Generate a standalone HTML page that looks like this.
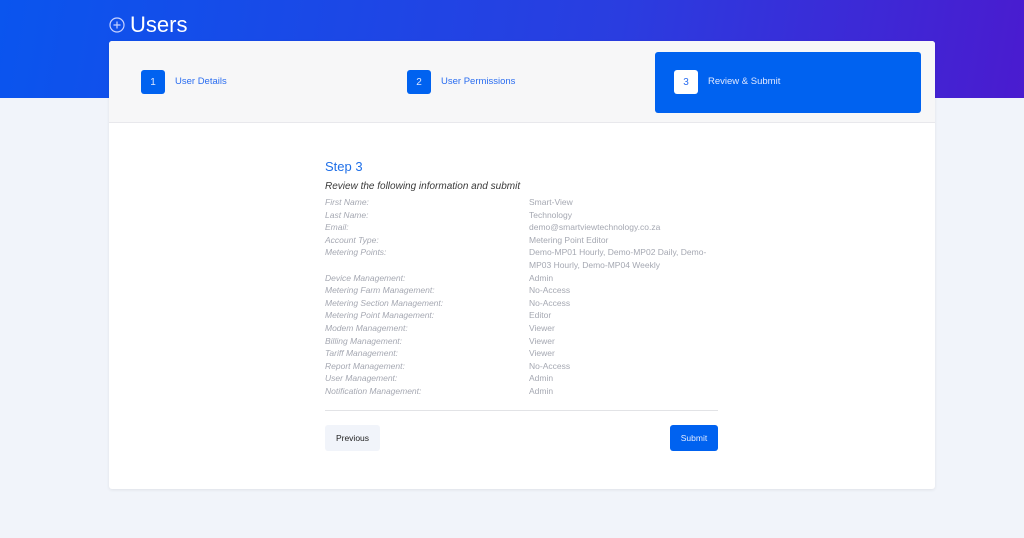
<!DOCTYPE html>
<html><head><style>
*{margin:0;padding:0;box-sizing:border-box}
body{width:1024px;height:538px;background:#f1f4fa;font-family:"Liberation Sans",sans-serif;position:relative;overflow:hidden}
.hdr{position:absolute;left:0;top:0;width:1024px;height:98px;background:linear-gradient(100deg,#0a55ee 0%,#2a3de0 60%,#4a1bcf 100%)}
.title{position:absolute;left:109px;top:12px;color:#fff;font-size:22px;display:flex;align-items:center}
.title svg{margin-right:5px}
.card{position:absolute;left:109px;top:41px;width:826px;height:448px;background:#fff;border-radius:3px;box-shadow:0 1px 3px rgba(0,0,0,.08)}
.steps{height:82px;background:#f7f7f8;border-bottom:1px solid #e8e8ec;position:relative;border-radius:3px 3px 0 0}
.st{position:absolute;top:29px;display:flex;align-items:center;font-size:9.5px;color:#2a6df0}
.num{width:24px;height:24px;border-radius:3px;background:#0062f0;color:#dfe8ff;font-size:10px;display:flex;align-items:center;justify-content:center;margin-right:10px}
.st span{margin-top:-1px}
.active{position:absolute;left:546px;top:11px;width:266px;height:61px;background:#0062f0;border-radius:3px}
.active .st{left:19px;top:18px;color:#e0e8ff}
.active .num{background:#fff;color:#2a6df0}
.content{position:absolute;left:216px;top:117px;width:393px}
h3{font-weight:normal;color:#1f6fe8;font-size:13px}
.sub{font-style:italic;color:#3a3a3a;font-size:10px;margin-top:7px;margin-bottom:4px}
table{border-collapse:collapse;font-size:8.5px;color:#a5a8b2}
td{line-height:12.6px;vertical-align:top;padding:0}
td.k{font-style:italic;width:204px}
td.v{width:180px}
.hr{border-top:1px solid #e2e3e6;margin-top:12px;width:393px}
.btns{display:flex;justify-content:space-between;margin-top:14px}
.prev{background:#f1f4fa;color:#222;font-size:8.5px;width:55px;height:26px;border-radius:3px;display:flex;align-items:center;justify-content:center}
.sub2{background:#0062f0;color:#e4ecff;font-size:8.5px;width:48px;height:26px;border-radius:3px;display:flex;align-items:center;justify-content:center}
</style></head><body>
<div class="hdr"></div>
<div class="title"><svg width="16" height="16" viewBox="0 0 16 16"><circle cx="8" cy="8" r="7" fill="none" stroke="#c8d2ff" stroke-width="1.2"/><path d="M8 4.5v7M4.5 8h7" stroke="#c8d2ff" stroke-width="1.2"/></svg>Users</div>
<div class="card">
<div class="steps">
<div class="st" style="left:32px"><div class="num">1</div><span>User Details</span></div>
<div class="st" style="left:298px"><div class="num">2</div><span>User Permissions</span></div>
<div class="active"><div class="st"><div class="num">3</div><span>Review &amp; Submit</span></div></div>
</div>
<div class="content" style="top:118px">
<h3>Step 3</h3>
<div class="sub">Review the following information and submit</div>
<table>
<tr><td class="k">First Name:</td><td class="v">Smart-View</td></tr>
<tr><td class="k">Last Name:</td><td class="v">Technology</td></tr>
<tr><td class="k">Email:</td><td class="v">demo@smartviewtechnology.co.za</td></tr>
<tr><td class="k">Account Type:</td><td class="v">Metering Point Editor</td></tr>
<tr><td class="k">Metering Points:</td><td class="v">Demo-MP01 Hourly, Demo-MP02 Daily, Demo-MP03 Hourly, Demo-MP04 Weekly</td></tr>
<tr><td class="k">Device Management:</td><td class="v">Admin</td></tr>
<tr><td class="k">Metering Farm Management:</td><td class="v">No-Access</td></tr>
<tr><td class="k">Metering Section Management:</td><td class="v">No-Access</td></tr>
<tr><td class="k">Metering Point Management:</td><td class="v">Editor</td></tr>
<tr><td class="k">Modem Management:</td><td class="v">Viewer</td></tr>
<tr><td class="k">Billing Management:</td><td class="v">Viewer</td></tr>
<tr><td class="k">Tariff Management:</td><td class="v">Viewer</td></tr>
<tr><td class="k">Report Management:</td><td class="v">No-Access</td></tr>
<tr><td class="k">User Management:</td><td class="v">Admin</td></tr>
<tr><td class="k">Notification Management:</td><td class="v">Admin</td></tr>
</table>
<div class="hr"></div>
<div class="btns"><div class="prev">Previous</div><div class="sub2">Submit</div></div>
</div>
</div>
</body></html>
